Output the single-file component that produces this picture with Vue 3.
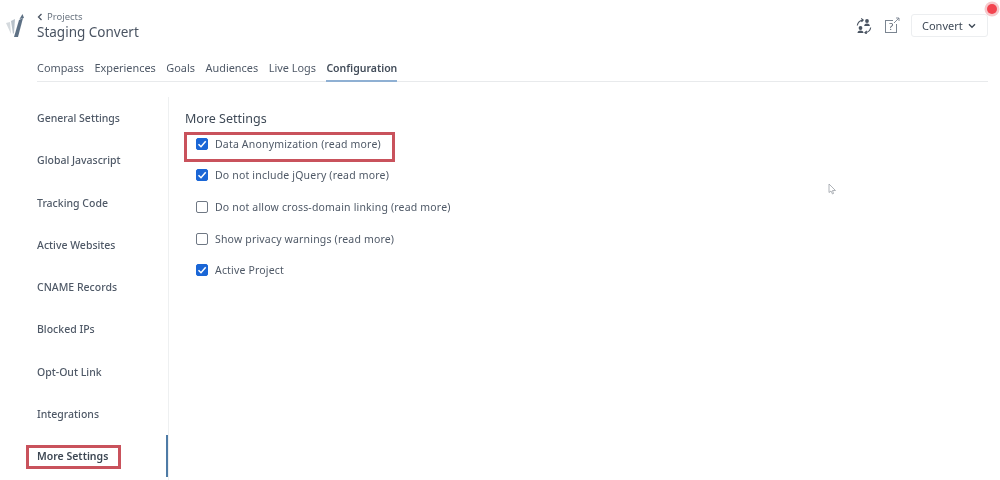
<script setup>
const tabs = ['Compass', 'Experiences', 'Goals', 'Audiences', 'Live Logs', 'Configuration']
const menu = ['General Settings', 'Global Javascript', 'Tracking Code', 'Active Websites', 'CNAME Records', 'Blocked IPs', 'Opt-Out Link', 'Integrations', 'More Settings']
const options = [
  { label: 'Data Anonymization (read more)', checked: true, marked: true },
  { label: 'Do not include jQuery (read more)', checked: true },
  { label: 'Do not allow cross-domain linking (read more)', checked: false },
  { label: 'Show privacy warnings (read more)', checked: false },
  { label: 'Active Project', checked: true },
]
</script>

<template>
  <div class="page">
    <header class="top">
      <svg class="logo" width="20" height="26" viewBox="0 0 20 26">
        <path d="M1 10 L5 9 L6 21 Z" fill="#d5dade" />
        <path d="M6 8 L10 6 L9 20 L8 21 Z" fill="#b9c2ca" />
        <path d="M14 7 L18 5 L13 24 L9 24 Z" fill="#5d7084" />
        <path d="M14.5 6 L17.5 1 L19 5 Z" fill="#5d7084" />
      </svg>
      <div class="crumbs">
        <div class="back">
          <svg width="6" height="8" viewBox="0 0 6 8"><path d="M4.5 1 L1.5 4 L4.5 7" fill="none" stroke="#4a5462" stroke-width="1.3" /></svg>
          <span>Projects</span>
        </div>
        <div class="title">Staging Convert</div>
      </div>
      <div class="actions">
        <svg class="ico" width="16" height="16" viewBox="0 0 16 16">
          <circle cx="11" cy="3" r="1.900" fill="#4a5462" />
          <path d="M8.200 8 Q8.200 5.400 11 5.400 Q13.800 5.400 13.800 8 Z" fill="#4a5462" />
          <circle cx="4.500" cy="10" r="1.900" fill="#4a5462" />
          <path d="M1.500 15 Q1.500 12.400 4.500 12.400 Q7.500 12.400 7.500 15 Z" fill="#4a5462" />
          <path d="M1.300 7.500 Q2 3 6.800 2 M5.200 0.500 L7.200 2 L5.500 3.800" fill="none" stroke="#4a5462" stroke-width="1.100" />
          <path d="M14.700 9.500 Q14 14 9.300 14.700 M10.800 12.900 L8.900 14.700 L10.800 16" fill="none" stroke="#4a5462" stroke-width="1.100" />
        </svg>
        <div class="help">
          <span class="qm">?</span>
          <svg class="arrow" width="7" height="7" viewBox="0 0 7 7"><path d="M1 6 L6 1 M3 1 H6 V4" fill="none" stroke="#7b8591" stroke-width="0.900" /></svg>
        </div>
        <button class="convert">
          <span>Convert</span>
          <svg width="8" height="6" viewBox="0 0 8 6"><path d="M1 1.200 L4 4.200 L7 1.200" fill="none" stroke="#3f4a57" stroke-width="1.400" /></svg>
        </button>
      </div>
    </header>

    <nav class="tabs">
      <span v-for="t in tabs" :key="t" class="tab" :class="{ active: t === 'Configuration' }">{{ t }}</span>
    </nav>

    <main class="body">
      <aside class="side">
        <div v-for="m in menu" :key="m" class="item" :class="{ on: m === 'More Settings' }">
          <span class="item-label">{{ m }}</span>
        </div>
      </aside>
      <section class="panel">
        <h2>More Settings</h2>
        <div v-for="o in options" :key="o.label" class="row" :class="{ marked: o.marked }">
          <span class="box" :class="{ checked: o.checked }">
            <svg v-if="o.checked" width="10" height="10" viewBox="0 0 10 10"><path d="M1.500 5.200 L4 7.700 L8.700 2.300" fill="none" stroke="#fff" stroke-width="1.500" /></svg>
          </span>
          <span>{{ o.label }}</span>
        </div>
      </section>
    </main>

    <span class="rec"></span>
    <svg class="cursor" width="9" height="12" viewBox="0 0 9 12"><path d="M1 1 V9.500 L3 8 L4.500 11 L5.500 10.500 L4.500 7.500 L7.500 7.500 Z" fill="#fff" stroke="#9aa0a6" stroke-width="0.800" /></svg>
  </div>
</template>

<style>
html, body { margin: 0; background: #fff; }
</style>

<style scoped>
.page {
  position: relative;
  width: 1000px;
  height: 480px;
  overflow: hidden;
  background: #fff;
  font-family: "Noto Sans", "Open Sans", sans-serif;
  color: #4f5967;
  filter: blur(0.45px);
}
.top {
  display: flex;
  align-items: flex-start;
  height: 52px;
  padding: 11px 12px 0 5px;
  box-sizing: border-box;
}
.logo { margin-top: 2px; }
.crumbs { margin-left: 12px; }
.back {
  display: flex;
  align-items: center;
  gap: 4px;
  font-size: 9.5px;
  line-height: 12px;
  color: #6b7581;
}
.title {
  font-size: 13.5px;
  line-height: 18px;
  color: #4a5462;
}
.actions {
  margin-left: auto;
  display: flex;
  align-items: center;
  margin-top: 3px;
}
.ico { margin-right: 13px; }
.help {
  position: relative;
  width: 12px;
  height: 13px;
  box-sizing: border-box;
  border: 1px solid #7b8591;
  margin-right: 14px;
  margin-top: 2px;
  display: flex;
  align-items: center;
  justify-content: center;
}
.qm { font-size: 9.5px; line-height: 1; color: #4a5462; }
.arrow { position: absolute; right: -4px; top: -4px; background: #fff; }
.convert {
  display: flex;
  align-items: center;
  justify-content: space-between;
  width: 77px;
  height: 23px;
  padding: 0 11px 0 10px;
  box-sizing: border-box;
  background: #fff;
  border: 1px solid #eceef0;
  border-radius: 3px;
  font: inherit;
  font-size: 11px;
  color: #3f4a57;
}
.tabs {
  display: flex;
  gap: 10.5px;
  margin-left: 37px;
  width: 951px;
  height: 30px;
  box-sizing: border-box;
  border-bottom: 1px solid #e8eaec;
  font-size: 10.9px;
}
.tab {
  line-height: 32px;
  height: 30px;
  box-sizing: border-box;
}
.tab.active {
  font-size: 10.5px;
  font-weight: 600;
  border-bottom: 2px solid #8fb0d3;
  color: #434d5a;
}
.body {
  display: flex;
  padding-top: 15px;
}
.side {
  width: 169px;
  height: 383px;
  box-sizing: border-box;
  border-right: 1px solid #eef0f1;
  padding: 0 0 0 26px;
}
.item {
  position: relative;
  height: 42.25px;
  display: flex;
  align-items: center;
  font-size: 10.5px;
  font-weight: 500;
}
.item-label { padding: 0 11px; }
.item.on { color: #3d4753; font-weight: 600; }
.item.on .item-label {
  margin-top: 1px;
  border: 3px solid #c9525c;
  padding: 1px 10px 2px 8px;
  line-height: 15px;
}
.item.on::after {
  content: "";
  position: absolute;
  right: 0;
  top: 0;
  bottom: 0;
  width: 2px;
  background: #4e7ba6;
}
.panel {
  padding: 12px 0 0 16px;
}
h2 {
  margin: 0 0 -1px;
  font-size: 12.5px;
  font-weight: 400;
  line-height: 20px;
  color: #3f4a57;
}
.row {
  position: relative;
  display: flex;
  align-items: center;
  gap: 7px;
  height: 31.6px;
  font-size: 10.5px;
  letter-spacing: 0.18px;
  padding-left: 11px;
  box-sizing: border-box;
  white-space: nowrap;
}
.row.marked::before {
  content: "";
  position: absolute;
  left: -1px;
  top: 4px;
  width: 211px;
  height: 30px;
  box-sizing: border-box;
  border: 3px solid #c9525c;
}
.box {
  width: 12px;
  height: 12px;
  box-sizing: border-box;
  border: 1.500px solid #6f7884;
  border-radius: 2px;
  display: flex;
  align-items: center;
  justify-content: center;
  flex: none;
}
.box.checked { background: #1a66d6; border-color: #1a66d6; }
.rec {
  position: absolute;
  right: 3px;
  top: 4px;
  width: 10px;
  height: 10px;
  border-radius: 50%;
  background: #f2444f;
  box-shadow: 0 0 0 2.500px #f6c9cc;
}
.cursor { position: absolute; left: 828px; top: 183px; }
</style>
